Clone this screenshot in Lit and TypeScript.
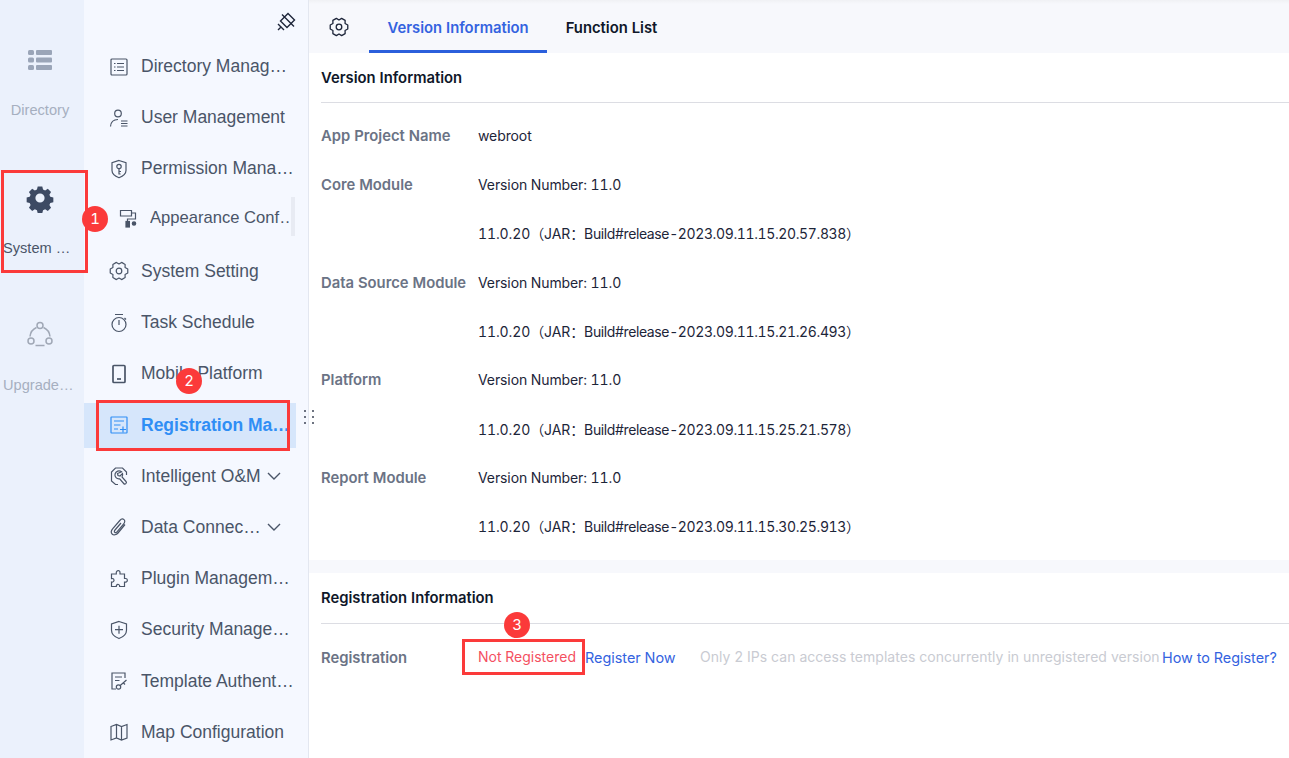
import { LitElement, html, css, svg } from 'lit';
import { customElement } from 'lit/decorators.js';

// outline gear with six lobes, used in the menu and on the tab bar
const gearPath = (() => {
  const pt = (deg: number, r: number) => {
    const a = (deg * Math.PI) / 180;
    return `${(10 + r * Math.cos(a)).toFixed(2)} ${(10 + r * Math.sin(a)).toFixed(2)}`;
  };
  const parts: string[] = [];
  for (let i = 0; i < 6; i++) {
    const c = i * 60;
    parts.push(pt(c - 13, 9), pt(c + 13, 9), pt(c + 30, 7));
  }
  return `M${parts.join('L')}z`;
})();

const menuIcons: Record<string, unknown> = {
  directory: svg`<rect x="2" y="2" width="16" height="16" rx="1"/><path d="M5 6.5h1.500M8 6.5h7M5 10h1.500M8 10h7M5 13.500h1.500M8 13.500h7"/>`,
  user: svg`<circle cx="9" cy="5.500" r="3.300"/><path d="M1.500 18.500c.3-4.500 3.200-7 7.500-7M12 13h6.500M12 15.500h6.500M12 18h6.500"/>`,
  permission: svg`<path d="M10 1.500l7 2.300v7.700c0 3.200-3.200 5.700-7 7.200-3.800-1.500-7-4-7-7.200V3.800z"/><circle cx="10" cy="7.500" r="2.200"/><path d="M10 9.700v5.800M10 12.500h2M10 15h1.600"/>`,
  appearance: svg`<path d="M2.500 2.500h11v5.500h-11zM13.500 5h4v6h-8v2.500"/><rect x="8" y="13.500" width="3.400" height="5.500" fill="#4a5568"/><circle cx="16" cy="15.500" r="1.700" fill="#4a5568"/>`,
  setting: svg`<path d="${gearPath}" stroke-linejoin="round"/><circle cx="10" cy="10" r="2.800"/>`,
  task: svg`<circle cx="10" cy="11.500" r="7"/><path d="M6 1.500h8M10 7v5M15.500 5l1.500 1.500"/>`,
  mobile: svg`<rect x="4" y="1.500" width="12" height="17" rx="1" stroke-width="1.700"/><path d="M8 15h4" stroke-width="1.700"/>`,
  registration: svg`<rect x="2" y="2" width="16" height="16" rx=".5"/><path d="M5 6h10M5 10h6.500M5 14h4M11 14.500h6M14 11.500v6"/>`,
  intelligent: svg`<path d="M9 18.500H6.500L2.500 15V6l4-4h7l4 4v3"/><path d="M12.500 5.800a4 4 0 1 0-1.800 7l4 4.700a1.500 1.500 0 0 0 2.300-2l-4-4.500a4 4 0 0 0 .5-3.500l-2.500 2.500-2-.5-.5-2z"/>`,
  data: svg`<path d="M16 7.500l-7 8.500c-1.600 1.900-4.300 2.400-5.700 1.200s-1.100-3.600.5-5.500l7-8.200c1.200-1.400 3-1.900 4.200-.9s.9 2.800-.3 4.200l-6.700 8c-.7.800-1.700 1-2.300.5s-.4-1.500.3-2.300l6-7"/>`,
  plugin: svg`<path d="M8 2c1.200-1 3.200-.2 3 1.600V5h4.500v4.500h1.200c2 0 2.200 2.800.6 3.500-.4.100-.4.200-1.800.2v4.300h-4.800c.4-2.200-2.500-2.700-3.200-1.100-.2.300-.2.700-.2 1.100H2.500v-4.500c2 .6 3.200-1.600 2.100-3-.5-.5-1.200-.6-2.100-.4V5h4.800c-.2-1.200-.2-2.300.7-3z"/>`,
  security: svg`<path d="M10 1.500l7.500 2.500v6.200c0 4-3.500 6.800-7.500 8.300-4-1.500-7.500-4.300-7.500-8.300V4z"/><path d="M6 9.700h8M10 5.700v8"/>`,
  template: svg`<path d="M16 7V2H3v16h4M6 6h7M6 9.500h4.500"/><circle cx="9.500" cy="16" r="2.200"/><path d="M11.200 14.500l6.300-5.500M14.500 12l1.500 1.500"/>`,
  map: svg`<path d="M2 4.500l5.500-2 5 2 5.500-2v13.500l-5.500 2-5-2L2 18zM7.500 2.500V16M12.500 4.500V18"/>`,
};

const menu = [
  ['directory', 'Directory Management', false],
  ['user', 'User Management', false],
  ['permission', 'Permission Management', false],
  ['appearance', 'Appearance Configuration', false],
  ['setting', 'System Setting', false],
  ['task', 'Task Schedule', false],
  ['mobile', 'Mobile Platform', false],
  ['registration', 'Registration Management', false],
  ['intelligent', 'Intelligent O&M', true],
  ['data', 'Data Connections', true],
  ['plugin', 'Plugin Management', false],
  ['security', 'Security Management', false],
  ['template', 'Template Authentication', false],
  ['map', 'Map Configuration', false],
] as [string, string, boolean][];

const versions = [
  ['App Project Name', 'webroot', ''],
  ['Core Module', 'Version Number: 11.0', ''],
  ['', '11.0.20（JAR：', 'Build#release-2023.09.11.15.20.57.838'],
  ['Data Source Module', 'Version Number: 11.0', ''],
  ['', '11.0.20（JAR：', 'Build#release-2023.09.11.15.21.26.493'],
  ['Platform', 'Version Number: 11.0', ''],
  ['', '11.0.20（JAR：', 'Build#release-2023.09.11.15.25.21.578'],
  ['Report Module', 'Version Number: 11.0', ''],
  ['', '11.0.20（JAR：', 'Build#release-2023.09.11.15.30.25.913'],
];

@customElement('app-root')
export class AppRoot extends LitElement {
  static styles = css`
    :host {
      display: flex;
      position: relative;
      width: 1289px;
      height: 758px;
      overflow: hidden;
      background: #fff;
      font-family: Inter, 'Liberation Sans', 'Noto Sans CJK SC', sans-serif;
      font-size: 14px;
      font-variant-numeric: tabular-nums;
      color: #1d2539;
    }

    /* left icon rail */
    .rail {
      width: 84px;
      flex: none;
      box-sizing: border-box;
      padding-top: 45px;
      background: #ebf1fc;
      display: flex;
      flex-direction: column;
      gap: 62.5px;
    }
    .rail-item {
      width: 80px;
      display: flex;
      flex-direction: column;
      align-items: center;
      gap: 25px;
      color: #a6afc0;
    }
    .rail-item.on { color: #4a5568; }
    .rail-item svg { width: 30px; height: 30px; display: block; }
    .rail-label {
      width: 74px;
      height: 20px;
      line-height: 20px;
      text-align: center;
      font-family: 'Liberation Sans', sans-serif;
      font-size: 14.6px;
      white-space: nowrap;
      overflow: hidden;
      text-overflow: ellipsis;
    }

    /* second level menu */
    .menu {
      width: 225px;
      flex: none;
      box-sizing: border-box;
      background: #f5f8ff;
      border-right: 1px solid #e3e7f0;
      position: relative;
    }
    .pin {
      height: 44px;
      display: flex;
      justify-content: flex-end;
      padding: 12px 12px 0 0;
      box-sizing: border-box;
    }
    .pin svg { width: 20px; height: 20px; }
    .list { display: flex; flex-direction: column; gap: 6.23px; }
    .item {
      width: 212px;
      height: 45px;
      box-sizing: border-box;
      padding-left: 25px;
      display: flex;
      align-items: center;
      color: #4a5568;
      font-family: 'Liberation Sans', sans-serif;
      font-size: 17.5px;
    }
    .item svg.ic {
      width: 20px;
      height: 20px;
      flex: none;
      margin-right: 12px;
      fill: none;
      stroke: currentColor;
      stroke-width: 1.2;
    }
    .item .txt {
      flex: 1;
      min-width: 0;
      overflow: hidden;
      white-space: nowrap;
      text-overflow: ellipsis;
    }
    .item svg.chev { width: 16px; height: 16px; flex: none; margin-left: 3px; margin-right: 14px; }
    .item.on { background: #d6e6fb; color: #2f8ef5; font-weight: 700; }
    .item.drag { width: 205px; margin: -2px 0 2px 9px; font-size: 16.6px; }
    .scroll {
      position: absolute;
      left: 207px;
      top: 197px;
      width: 4px;
      height: 39px;
      background: #e8ebf3;
    }
    .handle {
      position: absolute;
      left: 220px;
      top: 410px;
      display: grid;
      grid-template-columns: 2px 2px;
      gap: 4px 6px;
    }
    .handle i { width: 2px; height: 2px; border-radius: 50%; background: #3c4556; }

    /* main area */
    .main { flex: 1; min-width: 0; display: flex; flex-direction: column; }
    .tabs {
      height: 53px;
      flex: none;
      box-sizing: border-box;
      background: linear-gradient(#f0f1f4, #f7f8fc 4px);
      display: flex;
      font-weight: 600;
      font-size: 14.8px;
    }
    .tab-gear { width: 60px; display: flex; align-items: center; padding-left: 20px; box-sizing: border-box; }
    .tab-gear svg { width: 20px; height: 20px; fill: none; stroke: #1d2539; stroke-width: 1.3; stroke-linejoin: round; }
    .tab {
      height: 53px;
      box-sizing: border-box;
      padding: 0 18.5px;
      line-height: 57px;
      color: #0f1729;
    }
    .tab.on { color: #3463e0; border-bottom: 3px solid #2b5fdc; }
    .section { padding-left: 12px; }
    .head {
      height: 49px;
      line-height: 51px;
      font-weight: 600;
      font-size: 14.8px;
      color: #0f1729;
      border-bottom: 1px solid #dcdde3;
    }
    .head.tall { height: 50px; }
    .rows { padding-top: 8.4px; height: 457px; box-sizing: border-box; }
    .row { height: 48.8px; display: flex; align-items: center; }
    .key { width: 157px; flex: none; margin-top: 1px; color: #6b7385; font-weight: 600; font-size: 14.8px; white-space: nowrap; }
    .val { color: #1d2539; white-space: nowrap; letter-spacing: -0.1px; }
    .stamp { letter-spacing: -0.38px; }
    .band { height: 13px; flex: none; background: #f7f8fc; }
    .reg { height: 66px; display: flex; align-items: center; white-space: nowrap; }
    .bad { color: #f4505f; width: 107px; flex: none; margin-bottom: 2px; }
    .link { color: #3463e0; font-size: 14.4px; margin-top: 1px; }
    .now { width: 115px; flex: none; }
    .note { color: #c9cbd2; width: 462px; flex: none; font-variant-numeric: normal; letter-spacing: 0.03px; margin-bottom: 2px; }

    /* red callouts drawn over the screenshot */
    .box { position: absolute; box-sizing: border-box; border: 3px solid #fb3a3a; }
    .box.a { left: 1px; top: 170px; width: 87px; height: 103px; }
    .box.b { left: 96px; top: 400px; width: 194px; height: 51px; }
    .box.c { left: 462px; top: 639px; width: 123px; height: 36px; }
    .dot {
      position: absolute;
      width: 26px;
      height: 26px;
      border-radius: 50%;
      background: #fb3a3a;
      color: #fff;
      font-size: 15px;
      line-height: 26px;
      text-align: center;
    }
    .dot.a { left: 82px; top: 206px; }
    .dot.b { left: 176px; top: 368px; }
    .dot.c { left: 504px; top: 612px; }
  `;

  render() {
    return html`
      <div class="rail">
        <div class="rail-item">
          <svg viewBox="0 0 30 30" fill="#9aa5b8">
            <rect x="3" y="5" width="6" height="5" rx="1.5"/><rect x="11" y="5" width="16" height="5" rx="1"/>
            <rect x="3" y="12.5" width="6" height="5" rx="1.5"/><rect x="11" y="12.5" width="16" height="5" rx="1"/>
            <rect x="3" y="20" width="6" height="5" rx="1.5"/><rect x="11" y="20" width="16" height="5" rx="1"/>
          </svg>
          <div class="rail-label">Directory</div>
        </div>
        <div class="rail-item on">
          <svg viewBox="0 0 30 30">
            <path fill="#3d4a63" fill-rule="evenodd" d="M12.5 2.500h5l.8 3.300 2.300 1 2.900-1.800 3.500 3.500-1.800 2.900 1 2.300 3.300.8v5l-3.300.8-1 2.300 1.800 2.900-3.500 3.500-2.900-1.800-2.300 1-.8 3.300h-5l-.8-3.300-2.300-1-2.900 1.800-3.500-3.500 1.800-2.900-1-2.300-3.300-.8v-5l3.300-.8 1-2.300-1.800-2.900 3.500-3.500 2.900 1.800 2.300-1zM15 10a5 5 0 1 0 0 10 5 5 0 0 0 0-10z" transform="translate(1.2 1.2) scale(.92)"/>
          </svg>
          <div class="rail-label">System Management</div>
        </div>
        <div class="rail-item">
          <svg viewBox="0 0 30 30" fill="none" stroke="#a0a8b6" stroke-width="1.5">
            <circle cx="15" cy="5.5" r="3"/><circle cx="6" cy="21" r="3"/><circle cx="24" cy="21" r="3"/>
            <path d="M11.5 7.500A11 11 0 0 0 5 16.500M18.500 7.500A11 11 0 0 1 25 16.500M10.500 25.500h9"/>
          </svg>
          <div class="rail-label">Upgrade Center</div>
        </div>
      </div>

      <div class="menu">
        <div class="pin">
          <svg viewBox="0 0 20 20" fill="none" stroke="#1d2539" stroke-width="1.4">
            <path d="M12 1.500l6.500 6.500-7.500 7.500-6.500-6.500zM2 12l6 6M5.500 14.500L2 18M6 2.500l12 12"/>
          </svg>
        </div>
        <div class="list">
          ${menu.map(([icon, label, sub], i) => html`
            <div class="item ${i === 7 ? 'on' : ''} ${i === 3 ? 'drag' : ''}">
              <svg class="ic" viewBox="0 0 20 20">${menuIcons[icon]}</svg>
              <span class="txt">${label}</span>
              ${sub ? html`<svg class="chev" viewBox="0 0 16 16" fill="none" stroke="#4a5568" stroke-width="1.4"><path d="M2 5l6 6 6-6"/></svg>` : ''}
            </div>`)}
        </div>
        <div class="scroll"></div>
        <div class="handle">${[0, 1, 2, 3, 4, 5].map(() => html`<i></i>`)}</div>
      </div>

      <div class="main">
        <div class="tabs">
          <div class="tab-gear">
            <svg viewBox="0 0 20 20"><path d="${gearPath}"/><circle cx="10" cy="10" r="2.800"/></svg>
          </div>
          <div class="tab on">Version Information</div>
          <div class="tab">Function List</div>
        </div>
        <div class="section">
          <div class="head">Version Information</div>
          <div class="rows">
            ${versions.map(([k, v, stamp]) => html`
              <div class="row">
                <div class="key">${k}</div>
                <div class="val">${v}${stamp ? html`<span class="stamp">${stamp}</span>）` : ''}</div>
              </div>`)}
          </div>
        </div>
        <div class="band"></div>
        <div class="section">
          <div class="head tall">Registration Information</div>
          <div class="reg">
            <div class="key">Registration</div>
            <div class="bad">Not Registered</div>
            <div class="link now">Register Now</div>
            <div class="note">Only 2 IPs can access templates concurrently in unregistered version</div>
            <div class="link">How to Register?</div>
          </div>
        </div>
      </div>

      <div class="box a"></div>
      <div class="box b"></div>
      <div class="box c"></div>
      <div class="dot a">1</div>
      <div class="dot b">2</div>
      <div class="dot c">3</div>
    `;
  }
}
